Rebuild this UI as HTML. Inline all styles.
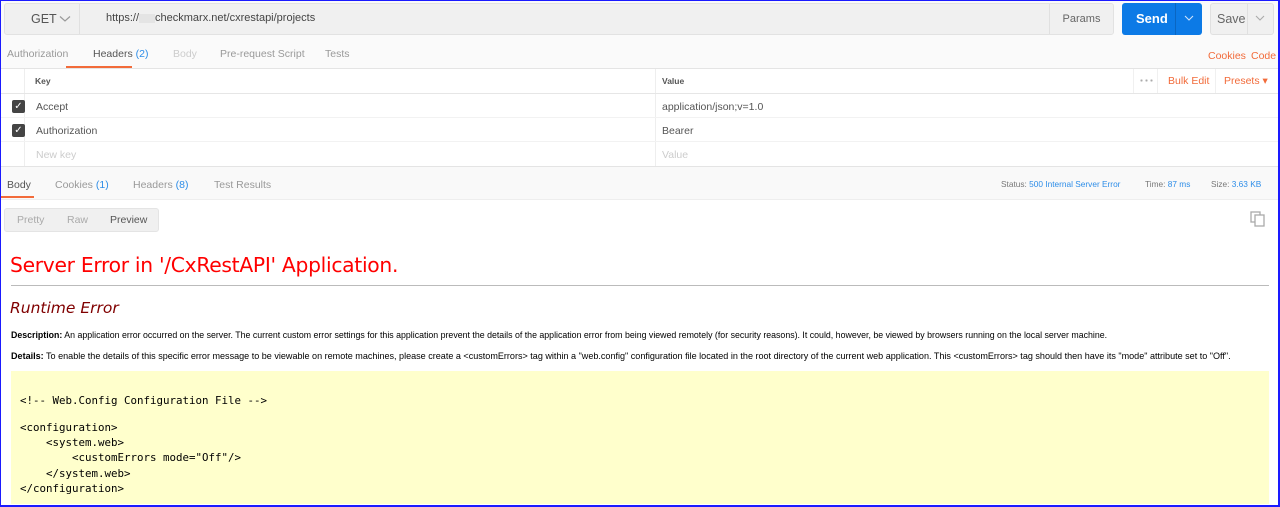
<!DOCTYPE html>
<html><head><meta charset="utf-8"><style>
*{margin:0;padding:0;box-sizing:border-box}
body{width:1280px;height:507px;overflow:hidden;background:#fff;font-family:"Liberation Sans",sans-serif;position:relative}
.a{position:absolute;white-space:nowrap}
.frame{position:absolute;left:0;top:0;width:1280px;height:507px;border:1px solid #1a1aff;border-right-width:2px;border-bottom-width:2px;pointer-events:none;z-index:9}
.g{color:#8a8a8a}
.o{color:#f26b3a}
.b{color:#2d8de8}
.cb{position:absolute;left:12px;width:13px;height:13px;background:#444;border-radius:2px;color:#fff;font-size:10px;line-height:13px;text-align:center}
</style></head><body>
<div class="a" style="left:0;top:0;width:1280px;height:200px;background:#fafafa"></div>
<!-- top bar -->
<div class="a" style="left:4px;top:3px;width:1110px;height:32px;background:#f0f0f0;border:1px solid #e2e2e2;border-radius:3px"></div>
<div class="a" style="left:79px;top:4px;width:1px;height:30px;background:#e0e0e0"></div>
<div class="a" style="left:31px;top:12px;font-size:12.5px;color:#555">GET</div>
<svg class="a" style="left:59px;top:15px" width="12" height="8" viewBox="0 0 12 8"><path d="M1 1.5 L6 6 L11 1.5" fill="none" stroke="#999" stroke-width="1.2"/></svg>
<div class="a" style="left:106px;top:12px;font-size:11px;color:#444">https://<span style="display:inline-block;width:16px;height:9px;background:#e4e4e4;vertical-align:middle"></span>checkmarx.net/cxrestapi/projects</div>
<div class="a" style="left:1049px;top:4px;width:64px;height:30px;border-left:1px solid #e0e0e0;font-size:11px;color:#666;text-align:center;line-height:30px">Params</div>
<div class="a" style="left:1122px;top:3px;width:80px;height:32px;background:#0c7ae6;border-radius:3px"></div>
<div class="a" style="left:1175px;top:3px;width:1px;height:32px;background:#0a66c2"></div>
<div class="a" style="left:1136px;top:11px;font-size:13px;font-weight:bold;color:#fff">Send</div>
<svg class="a" style="left:1184px;top:15px" width="10" height="6" viewBox="0 0 10 6"><path d="M1 1 L5 5 L9 1" fill="none" stroke="#cfe3fb" stroke-width="1.1"/></svg>
<div class="a" style="left:1210px;top:3px;width:64px;height:32px;background:#f0f0f0;border:1px solid #e0e0e0;border-radius:3px"></div>
<div class="a" style="left:1247px;top:4px;width:1px;height:30px;background:#e0e0e0"></div>
<div class="a" style="left:1217px;top:12px;font-size:12.5px;color:#666">Save</div>
<svg class="a" style="left:1255px;top:15px" width="10" height="6" viewBox="0 0 10 6"><path d="M1 1 L5 5 L9 1" fill="none" stroke="#aaa" stroke-width="1.1"/></svg>
<!-- request tabs -->
<div class="a g" style="left:7px;top:48px;font-size:10.5px;color:#999">Authorization</div>
<div class="a" style="left:93px;top:48px;font-size:10.5px;color:#555">Headers <span class="b">(2)</span></div>
<div class="a" style="left:66px;top:66px;width:66px;height:2px;background:#f26b3a"></div>
<div class="a" style="left:173px;top:48px;font-size:10.5px;color:#ccc">Body</div>
<div class="a" style="left:220px;top:48px;font-size:10.5px;color:#999">Pre-request Script</div>
<div class="a" style="left:325px;top:48px;font-size:10.5px;color:#999">Tests</div>
<div class="a o" style="left:1208px;top:50px;font-size:10.5px">Cookies</div>
<div class="a o" style="left:1251px;top:50px;font-size:10.5px">Code</div>
<!-- table -->
<div class="a" style="left:0;top:68px;width:1280px;height:99px;background:#fff;border-top:1px solid #e4e4e4;border-bottom:1px solid #e4e4e4"></div>
<div class="a" style="left:24px;top:69px;width:1px;height:97px;background:#eee"></div>
<div class="a" style="left:655px;top:69px;width:1px;height:97px;background:#eee"></div>
<div class="a" style="left:1133px;top:69px;width:1px;height:24px;background:#f0f0f0"></div>
<div class="a" style="left:1157px;top:69px;width:1px;height:24px;background:#f0f0f0"></div>
<div class="a" style="left:1215px;top:69px;width:1px;height:24px;background:#f0f0f0"></div>
<div class="a" style="left:0;top:93px;width:1280px;height:1px;background:#e6e6e6"></div>
<div class="a" style="left:0;top:117px;width:1280px;height:1px;background:#f2f2f2"></div>
<div class="a" style="left:0;top:141px;width:1280px;height:1px;background:#f2f2f2"></div>
<div class="a" style="left:35px;top:76px;font-size:8.5px;font-weight:bold;color:#555">Key</div>
<div class="a" style="left:662px;top:76px;font-size:8.5px;font-weight:bold;color:#555">Value</div>
<div class="a" style="left:1139px;top:79px;width:14px;height:3px;background:radial-gradient(circle,#aaa 1px,transparent 1.2px) 0 0/5px 3px repeat-x"></div>
<div class="a o" style="left:1168px;top:75px;font-size:10.5px">Bulk Edit</div>
<div class="a o" style="left:1224px;top:75px;font-size:10.5px">Presets &#9662;</div>
<div class="cb" style="top:100px">&#10003;</div>
<div class="cb" style="top:124px">&#10003;</div>
<div class="a" style="left:36px;top:101px;font-size:10.5px;color:#555">Accept</div>
<div class="a" style="left:36px;top:125px;font-size:10.5px;color:#555">Authorization</div>
<div class="a" style="left:36px;top:149px;font-size:10.5px;color:#ccc">New key</div>
<div class="a" style="left:662px;top:101px;font-size:10.5px;color:#555">application/json;v=1.0</div>
<div class="a" style="left:662px;top:125px;font-size:10.5px;color:#555">Bearer</div>
<div class="a" style="left:662px;top:149px;font-size:10.5px;color:#ccc">Value</div>
<!-- response tabs -->
<div class="a" style="left:0;top:167px;width:1280px;height:33px;background:#f9f9f9;border-bottom:1px solid #eee"></div>
<div class="a" style="left:7px;top:179px;font-size:10.5px;color:#555">Body</div>
<div class="a" style="left:0;top:196px;width:34px;height:2px;background:#f26b3a"></div>
<div class="a" style="left:55px;top:179px;font-size:10.5px;color:#999">Cookies <span class="b">(1)</span></div>
<div class="a" style="left:133px;top:179px;font-size:10.5px;color:#999">Headers <span class="b">(8)</span></div>
<div class="a" style="left:214px;top:179px;font-size:10.5px;color:#999">Test Results</div>
<div class="a" style="left:1001px;top:179px;font-size:8.3px;color:#777">Status: <span class="b">500 Internal Server Error</span></div>
<div class="a" style="left:1145px;top:179px;font-size:8.3px;color:#777">Time: <span class="b">87 ms</span></div>
<div class="a" style="left:1211px;top:179px;font-size:8.3px;color:#777">Size: <span class="b">3.63 KB</span></div>
<!-- pretty/raw/preview -->
<div class="a" style="left:4px;top:208px;width:155px;height:24px;background:#f0f0f0;border:1px solid #e4e4e4;border-radius:3px"></div>
<div class="a" style="left:17px;top:214px;font-size:10.5px;color:#aaa">Pretty</div>
<div class="a" style="left:67px;top:214px;font-size:10.5px;color:#aaa">Raw</div>
<div class="a" style="left:110px;top:214px;font-size:10.5px;color:#555">Preview</div>
<svg class="a" style="left:1250px;top:211px" width="16" height="16" viewBox="0 0 16 16"><rect x="1" y="1" width="9" height="10" fill="#fff" stroke="#aaa" stroke-width="1.3"/><rect x="5" y="4" width="9" height="11" fill="#fff" stroke="#aaa" stroke-width="1.3"/></svg>
<!-- content -->
<div class="a" style="left:10px;top:253px;font-size:20.3px;color:#ff0000;font-family:'DejaVu Sans',sans-serif;letter-spacing:-0.3px">Server Error in '/CxRestAPI' Application.</div>
<div class="a" style="left:11px;top:285px;width:1258px;height:1px;background:#bbb"></div>
<div class="a" style="left:10px;top:299px;font-size:15.5px;color:#800000;font-style:italic;font-family:'DejaVu Sans',sans-serif">Runtime Error</div>
<div class="a" style="left:11px;top:330px;font-size:8.8px;color:#000"><b>Description:</b> An application error occurred on the server. The current custom error settings for this application prevent the details of the application error from being viewed remotely (for security reasons). It could, however, be viewed by browsers running on the local server machine.</div>
<div class="a" style="left:11px;top:351px;font-size:9.05px;color:#000"><b>Details:</b> To enable the details of this specific error message to be viewable on remote machines, please create a &lt;customErrors&gt; tag within a "web.config" configuration file located in the root directory of the current web application. This &lt;customErrors&gt; tag should then have its "mode" attribute set to "Off".</div>
<div class="a" style="left:11px;top:371px;width:1258px;height:133px;background:#ffffcc"></div>
<pre class="a" style="left:20px;top:393px;white-space:pre;font-family:'DejaVu Sans Mono','Liberation Mono',monospace;font-size:10.8px;line-height:15px;color:#000">&lt;!-- Web.Config Configuration File --&gt;</pre>
<pre class="a" style="left:20px;top:420px;white-space:pre;font-family:'DejaVu Sans Mono','Liberation Mono',monospace;font-size:10.8px;line-height:15.2px;color:#000">&lt;configuration&gt;
    &lt;system.web&gt;
        &lt;customErrors mode="Off"/&gt;
    &lt;/system.web&gt;
&lt;/configuration&gt;</pre>
<div class="frame"></div>
</body></html>
